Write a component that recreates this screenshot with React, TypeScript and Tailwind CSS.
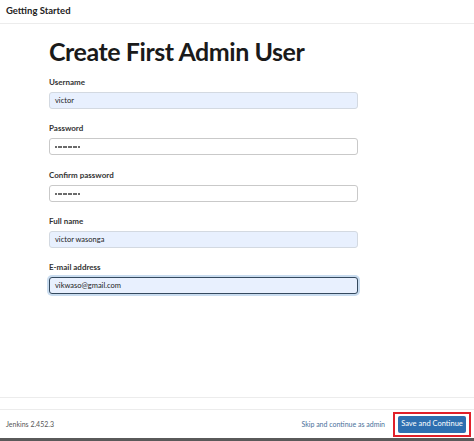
import React from "react";

const font = { fontFamily: 'Lato, "Open Sans", sans-serif' };

function Dots() {
  return (
    <div className="flex items-center gap-[0.5px]">
      {Array.from({ length: 10 }).map((_, i) => (
        <span key={i} className="block h-[2px] w-[2px] rounded-full bg-[#3a3a3a]" />
      ))}
    </div>
  );
}

function Field({ label, value, type, autofill, focus }: { label: string; value: string; type?: string; autofill?: boolean; focus?: boolean }) {
  return (
    <div className="flex flex-col">
      <div className="h-[12px] text-[8px] font-bold leading-[12px] text-[#333]">{label}</div>
      <div
        className={
          "mt-[4px] flex h-[17px] w-[309px] items-center rounded-[3px] px-[5px] " +
          (focus
            ? "border-[1.5px] border-[#34495e] bg-[#e8f0fe] shadow-[0_0_0_2px_#c9dcef]"
            : autofill
            ? "border border-[#d3d9e1] bg-[#e8f0fe]"
            : "border border-[#c9c9c9] bg-white")
        }
      >
        {type === "password" ? <Dots /> : <span className="text-[7.5px] leading-none text-[#222]">{value}</span>}
      </div>
    </div>
  );
}

export default function App() {
  return (
    <div className="flex h-[441px] w-[474px] flex-col bg-white" style={font}>
      <div className="flex h-[24px] shrink-0 items-center border-b border-[#ececec] px-[6px]">
        <span className="text-[9.5px] font-bold text-[#222]">Getting Started</span>
      </div>
      <div className="flex flex-1 flex-col pl-[49px]">
        <h1 className="mt-[12px] h-[30px] text-[25px] font-bold leading-[30px] tracking-[-0.45px] text-[#1a1a1a]">
          Create First Admin User
        </h1>
        <div className="mt-[10px] flex flex-col gap-[13px]">
          <Field label="Username" value="victor" autofill />
          <Field label="Password" value="" type="password" />
          <div className="mt-[1px]">
            <Field label="Confirm password" value="" type="password" />
          </div>
          <Field label="Full name" value="victor wasonga" autofill />
          <Field label="E-mail address" value="vikwaso@gmail.com" focus />
        </div>
      </div>
      <div className="h-[12px] shrink-0 border-t border-[#ececec]" />
      <div className="flex h-[29px] shrink-0 items-center border-t border-[#ececec] pl-[6px] pr-[3px]">
        <span className="text-[7px] text-[#555]">Jenkins 2.452.3</span>
        <div className="flex-1" />
        <span className="mr-[8px] text-[7px] text-[#49709a]">Skip and continue as admin</span>
        <div className="flex h-[25px] w-[78px] items-center justify-center border-2 border-[#e0202a]">
          <div className="flex h-[17px] w-[68px] items-center justify-center rounded-[2px] bg-[#2e6fb0]">
            <span className="text-[7.5px] text-white">Save and Continue</span>
          </div>
        </div>
      </div>
      <div className="h-[3px] shrink-0 bg-[#5a5a5a]" />
    </div>
  );
}
